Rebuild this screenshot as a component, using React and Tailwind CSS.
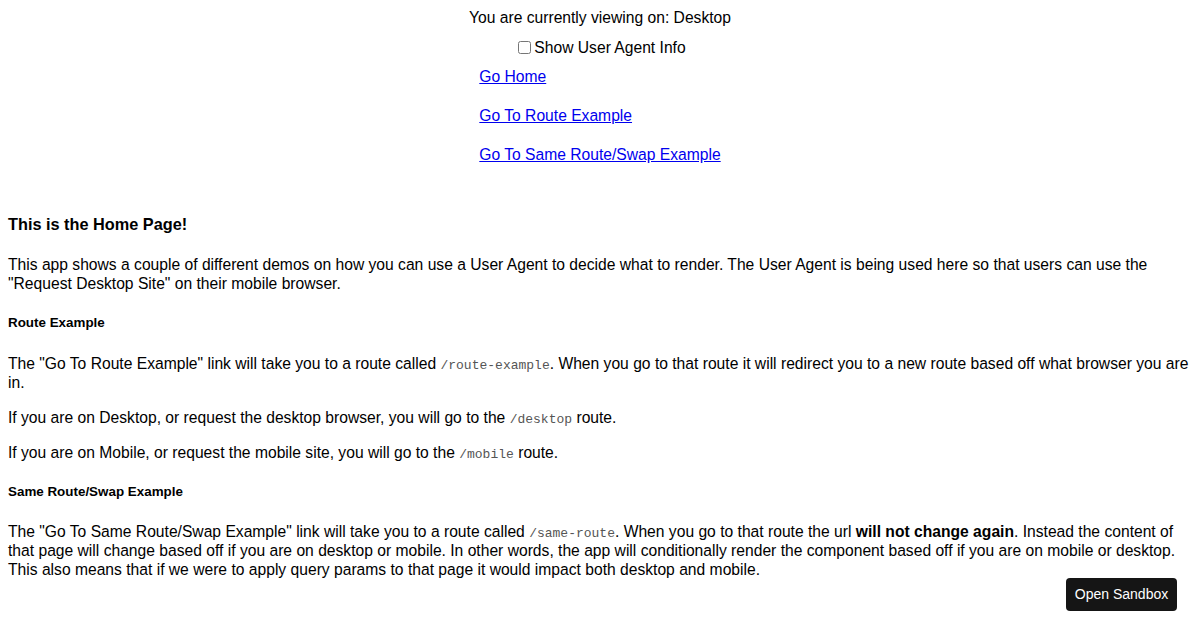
const Code = ({ children }) => (
  <code className="font-['Liberation_Mono',monospace] text-[13px] leading-none text-[#555]">{children}</code>
);

const App = () => {
  return (
    <div className="min-h-[630px] bg-white p-2 font-['Liberation_Sans',Arial,sans-serif] text-[15.65px] leading-[19px] text-black">
      <div className="flex flex-col items-center">
        <div>You are currently viewing on: Desktop</div>
        <label className="mt-[11px] flex items-center">
          <input type="checkbox" className="mr-[3px] ml-[4px] h-[13px] w-[13px]" />
          Show User Agent Info
        </label>
        <nav className="mt-[10px] flex flex-col gap-[20px] text-left">
          <a href="#" className="text-[#0000ee] underline">Go Home</a>
          <a href="#" className="text-[#0000ee] underline">Go To Route Example</a>
          <a href="#" className="text-[#0000ee] underline">Go To Same Route/Swap Example</a>
        </nav>
      </div>

      <h3 className="mt-[50px] text-[16.3px] leading-[20px] font-bold">This is the Home Page!</h3>
      <p className="mt-[21px]">
        This app shows a couple of different demos on how you can use a User Agent to decide what to render. The User Agent is being used here so that users can use the "Request Desktop Site" on their mobile browser.
      </p>

      <h5 className="mt-[22px] text-[13.4px] leading-[15px] font-bold">Route Example</h5>
      <p className="mt-[24px]">
        The "Go To Route Example" link will take you to a route called <Code>/route-example</Code>. When you go to that route it will redirect you to a new route based off what browser you are in.
      </p>
      <p className="mt-[16px]">
        If you are on Desktop, or request the desktop browser, you will go to the <Code>/desktop</Code> route.
      </p>
      <p className="mt-[16px]">
        If you are on Mobile, or request the mobile site, you will go to the <Code>/mobile</Code> route.
      </p>

      <h5 className="mt-[22px] text-[13.4px] leading-[15px] font-bold">Same Route/Swap Example</h5>
      <p className="mt-[23px]">
        The "Go To Same Route/Swap Example" link will take you to a route called <Code>/same-route</Code>. When you go to that route the url <strong className="font-bold">will not change again</strong>. Instead the content of that page will change based off if you are on desktop or mobile. In other words, the app will conditionally render the component based off if you are on mobile or desktop. This also means that if we were to apply query params to that page it would impact both desktop and mobile.
      </p>

      <button className="fixed right-[23px] bottom-[19px] h-[33px] w-[111px] rounded-[4px] bg-[#151515] font-['Liberation_Sans',Arial,sans-serif] text-[14px] text-white">
        Open Sandbox
      </button>
    </div>
  );
};

export default App;
